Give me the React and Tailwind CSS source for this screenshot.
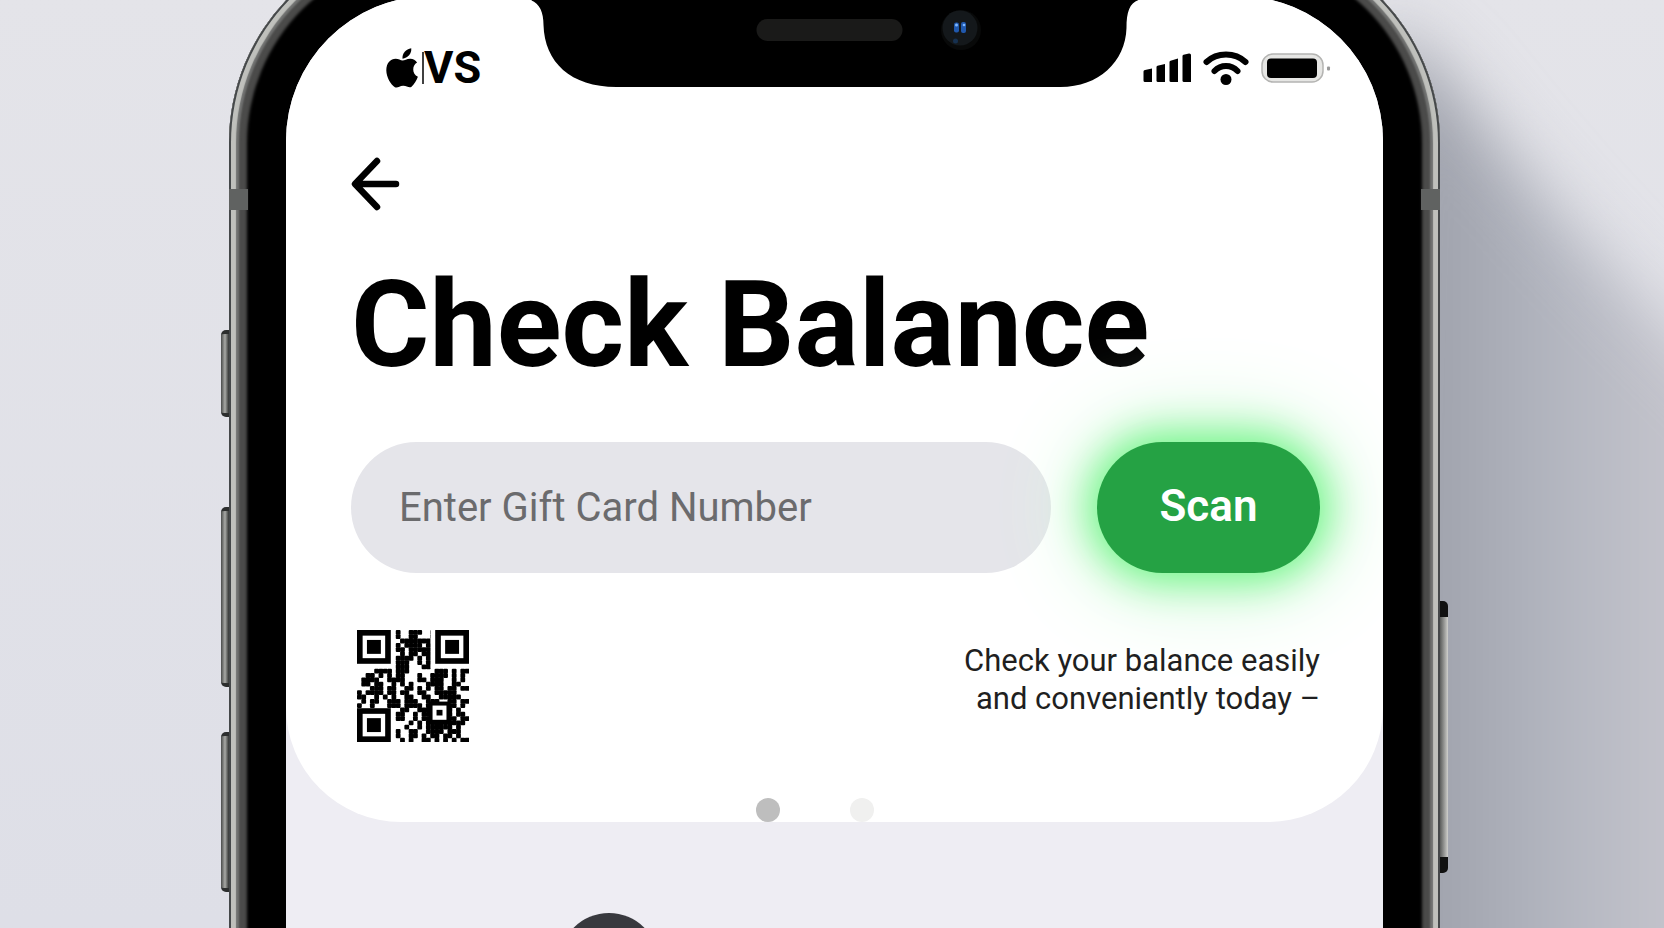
import React, { useState } from 'react';

const QR_ROWS = [
    '.........#..###..#........',
    '.........#..##...#........',
    '..........#######.........',
    '.........#.####.##........',
    '.........##.######........',
    '..........#.##.###........',
    '.........####.#.##........',
    '.........###..#.##........',
    '.........###...##.........',
    '....####.###......###.#.##',
    '..##.#.#.##...#..####.#.#.',
    '.####..####...##.###..#.#.',
    '.##.##..#.#.#...####..##..',
    '...###.##..##.#.#.##.##.##',
    '#.####.##.##..##..#####...',
    '##..#.#.#..##..##..#####..',
    '.#.##..###.###..###..##.##',
    '#..#...###.####.##.#.##.#.',
    '..........##..####...#.#..',
    '.........##..#.###...#.##.',
    '.........##..#.###...##.##',
    '............#.#.#########.',
    '...........#..#.######.#..',
    '.........#..##..####.###..',
    '.........#..##.#.##.##.#..',
    '..........#.#..##.#.#.#.##',
];

const Finder = ({ x, y }) => (
    <g>
        <rect x={x} y={y} width="102" height="102" fill="#000" />
        <rect x={x + 17} y={y + 17} width="68" height="68" fill="#fff" />
        <rect x={x + 30} y={y + 30} width="42" height="42" fill="#000" />
    </g>
);

const QrCode = () => (
    <svg viewBox="0 0 338 338" className="w-28 h-28" role="img" aria-label="QR code">
        {QR_ROWS.map((row, j) =>
            row.split('').map((cell, i) =>
                cell === '#' ? <rect key={`${i}-${j}`} x={i * 13} y={j * 13} width="14.5" height="14.5" rx="3" /> : null
            )
        )}
        <rect x="222" y="0" width="14" height="116" fill="#fff" />
        <Finder x={0} y={0} />
        <Finder x={236} y={0} />
        <Finder x={0} y={236} />
        <rect x="216" y="216" width="66" height="68" />
        <rect x="228" y="228" width="42" height="43" fill="#fff" />
        <rect x="240" y="241" width="18" height="17" />
    </svg>
);

const AppleLogo = () => (
    <svg viewBox="0 0 31 39" className="w-8 h-10" aria-hidden="true">
        <path d="M16 10.500C15.400 5.500 19.500 1 24.500 .3C25.200 5.500 21 10 16 10.500Z" />
        <path d="M30.200 14.200C25 17.300 25.200 25.200 31 28.100C29.800 31.700 27.200 35.800 24.800 37.700C22.500 39.200 20.300 37 16.800 36.800C13 36.700 11.300 39.500 8.600 38.200C4.500 36 .3 28.500 .2 22C.1 14.500 4.500 10.500 9.300 10.500C12 10.500 14.200 12.200 16 12.200C18 12.200 20.300 10.300 23.700 10.400C26.300 10.500 28.800 11.800 30.200 14.200Z" />
    </svg>
);

const Signal = () => (
    <svg viewBox="0 0 48 30" className="w-12 h-[30px]" aria-hidden="true">
        <path d="M2 17L9 15.500V29H2Q.5 29 .5 27.500V18.500Q.5 17.200 2 17Z" />
        <path d="M14.500 12.700L22 11V29H15Q13.500 29 13.500 27.500V14Q13.500 13 14.500 12.700Z" />
        <path d="M27.500 7.700L35 5.500V29H28Q26.500 29 26.500 27.500V9Q26.500 8 27.500 7.700Z" />
        <path d="M40.500 1.700L46 .5Q48 .3 48 2V29H41Q39.500 29 39.500 27.500V3Q39.500 2 40.500 1.700Z" />
    </svg>
);

const Wifi = () => (
    <svg viewBox="0 0 46 34" className="w-[46px] h-[34px]" fill="none" stroke="#000" strokeLinecap="round" aria-hidden="true">
        <path d="M3.500 11C14 1 32 1 42.500 11" strokeWidth="6" />
        <path d="M11.500 20C18 13.300 28 13.300 34.500 20" strokeWidth="6" />
        <circle cx="23" cy="28.500" r="5.500" fill="#000" stroke="none" />
    </svg>
);

const Battery = () => (
    <svg viewBox="0 0 70 30" className="w-[70px] h-[30px]" aria-hidden="true">
        <rect x="1" y="1" width="61" height="28" rx="11" fill="#e6e6e4" stroke="#b4b4b2" strokeWidth="1.500" />
        <rect x="6" y="5.500" width="50" height="19.500" rx="4" />
        <rect x="66" y="13.500" width="3" height="4" rx="1" fill="#999" />
    </svg>
);

const Notch = () => (
    <div className="absolute left-1/2 top-1 -translate-x-1/2">
        <svg viewBox="1 0 607 87" className="w-[607px] h-[87px]" aria-hidden="true">
            <path d="M0 0C9 3 13 12 13 25C14 62 40 87 86 87H530C568 87 595 62 596 28C596 12 599 3 608 0Z" />
            <rect x="226" y="19" width="146" height="22" rx="11" fill="#1a1a19" />
            <circle cx="430.500" cy="30" r="20" fill="#080909" />
            <circle cx="429.500" cy="28" r="17.500" fill="#14181b" />
            <rect x="423.500" y="22.500" width="5" height="10" rx="2" fill="#2058ad" />
            <rect x="430.500" y="22" width="5" height="11" rx="2" fill="#2058ad" />
            <circle cx="426" cy="25" r="1.500" fill="#7db7ff" />
            <circle cx="433.500" cy="25" r="1.300" fill="#7db7ff" />
            <circle cx="425" cy="41" r="2.500" fill="#16304f" />
        </svg>
    </div>
);

const StatusBar = () => (
    <div className="flex items-center justify-between pl-[100px] pr-[52px] pt-[52px]">
        <div className="flex items-center">
            <AppleLogo />
            <span className="ml-1 w-[2px] h-8 bg-neutral-700" />
            <span className="text-[45px] leading-10 font-bold">VS</span>
        </div>
        <div className="flex items-center">
            <Signal />
            <span className="ml-3"><Wifi /></span>
            <span className="ml-3"><Battery /></span>
        </div>
    </div>
);

const SideKey = ({ className }) => (
    <div className={`absolute w-2 -left-2 rounded-l-[5px] border-y-4 border-[#2c2e2e] bg-linear-to-r from-[#4a4c4b] via-[#a9aaa7] to-[#333534] ${className}`} />
);

const App = () => {
    const [cardNumber, setCardNumber] = useState('');

    return (
        <main className="h-screen overflow-hidden pl-[5px] bg-linear-to-b from-[#e4e4e9] to-[#dedfe7] font-[Roboto,'Liberation_Sans',sans-serif] text-black">
            <div className="relative mx-auto w-full max-w-[1211px] -mt-16 h-[1100px]">
                {/* Shadow cast by the phone */}
                <div className="absolute top-[84px] -right-[380px] w-[480px] h-[1100px] blur-[32px]">
                    <div className="h-full bg-linear-to-r from-[#a0a3ad] from-20% via-[#b3b6c0] via-45% to-[#c4c4cc] to-70% [clip-path:polygon(40px_0px,100px_50px,160px_125px,220px_195px,290px_270px,400px_380px,480px_480px,480px_1100px,0px_1100px)]" />
                </div>

                <SideKey className="top-[394px] h-[87px]" />
                <SideKey className="top-[571px] h-[180px]" />
                <SideKey className="top-[796px] h-[160px]" />
                <div className="absolute -right-2 top-[665px] w-2 h-[272px] rounded-r-[5px] border-t-[16px] border-b-[16px] border-[#111] bg-linear-to-r from-[#5c5d5c] to-[#d0d0cd]" />

                {/* Metal frame and bezel */}
                <div className="relative h-full p-[19px] rounded-t-[207px] bg-black shadow-[inset_0_0_0_2px_#45484a,inset_0_0_1px_7px_#bfc0bc,inset_0_0_2px_10px_#717271,inset_0_0_3px_18px_#4b4b4a]">
                    <div className="absolute left-0 top-[253px] w-[19px] h-[21px] bg-[#606261]" />
                    <div className="absolute right-0 top-[253px] w-[19px] h-[21px] bg-[#606261]" />

                    <div className="h-full px-[38px] pt-[41px]">
                        <div className="relative h-full overflow-hidden rounded-t-[145px] bg-[#eeedf3]">
                            <section className="h-[826px] overflow-hidden bg-white rounded-b-[115px]">
                                <StatusBar />
                                <div className="pl-[65px] pr-[63px]">
                                    <button type="button" aria-label="Back" className="mt-[69px] block">
                                        <svg viewBox="0 0 50 54" className="w-[50px] h-[54px]" fill="none" stroke="#000" strokeWidth="6.500" strokeLinecap="round" strokeLinejoin="round" aria-hidden="true">
                                            <path d="M26 4L4 27L26 50M5 27H45" />
                                        </svg>
                                    </button>
                                    <h1 className="mt-[50px] text-[120px] leading-[128px] font-bold whitespace-nowrap">Check Balance</h1>
                                    <form className="mt-[53px] flex gap-[46px]" onSubmit={(e) => e.preventDefault()}>
                                        <input
                                            type="text"
                                            aria-label="Gift card number"
                                            placeholder="Enter Gift Card Number"
                                            value={cardNumber}
                                            onChange={(e) => setCardNumber(e.target.value)}
                                            className="min-w-0 flex-1 h-[131px] px-12 rounded-full bg-[#e5e5ea] text-[40px] placeholder:text-[#6b6b6d] outline-none"
                                        />
                                        <button type="submit" className="w-[223px] h-[131px] pb-1 rounded-full bg-[#25a244] text-white text-[44px] font-semibold shadow-[0_0_42px_8px_#6cf683,0_0_90px_18px_#d3f8da]">
                                            Scan
                                        </button>
                                    </form>
                                    <div className="mt-[57px] flex justify-between pl-1.5">
                                        <QrCode />
                                        <p className="mt-3 text-right text-[31px] leading-[38px] text-[#1f1f21]">
                                            Check your balance easily<br />and conveniently today –
                                        </p>
                                    </div>
                                </div>
                                <div className="mt-14 pr-10 flex justify-center gap-[70px]">
                                    <span className="w-6 h-6 rounded-full bg-[#bebebe]" />
                                    <span className="w-6 h-6 rounded-full bg-[#f0f0ef]" />
                                </div>
                            </section>
                            <div className="mt-[91px] ml-[273px] w-[100px] h-[100px] rounded-full bg-[#38393e]" />
                            <Notch />
                        </div>
                    </div>
                </div>
            </div>
        </main>
    );
};

export default App;
